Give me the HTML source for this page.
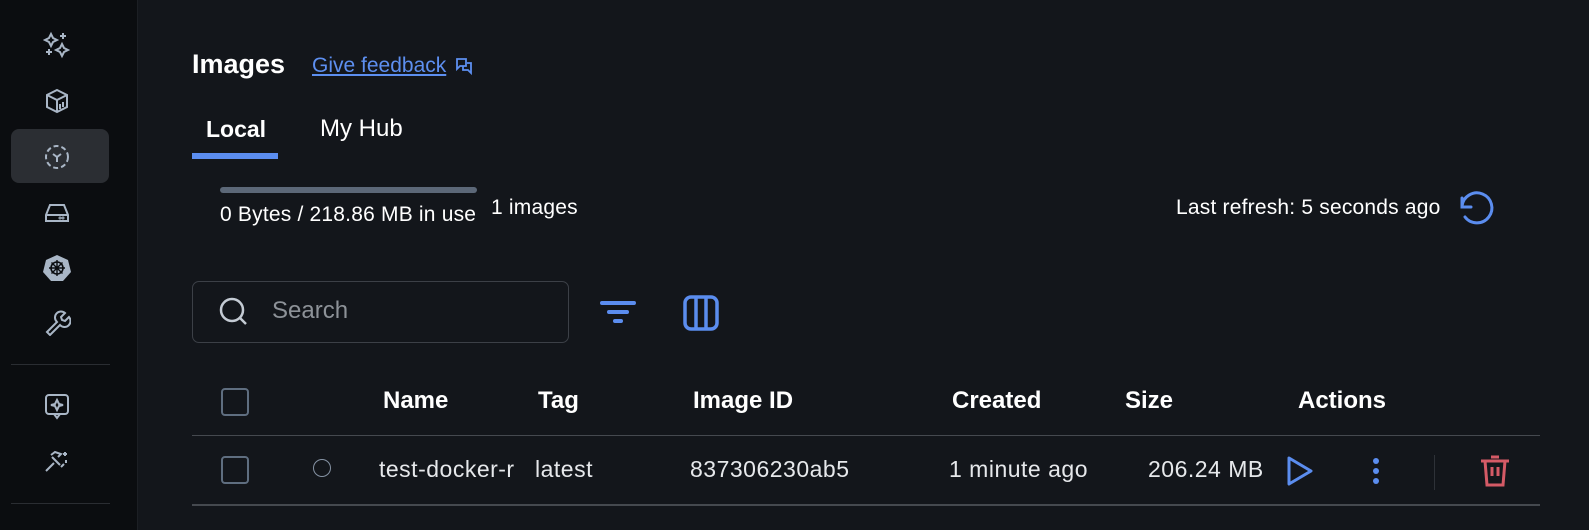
<!DOCTYPE html><html><head><style>
*{margin:0;padding:0;box-sizing:border-box}
body{width:1589px;height:530px;background:#13161b;font-family:"Liberation Sans",sans-serif;color:#fff;position:relative;overflow:hidden}
.a{position:absolute;white-space:nowrap}
.side{position:absolute;left:0;top:0;width:137px;height:530px;background:#0b0d10}
.ic{position:absolute;left:43px;width:28px;height:28px}
.h{font-weight:bold;font-size:24px;line-height:28px}
.r{font-size:23px;line-height:28px;color:#e6e8eb;letter-spacing:0.5px}
.t{font-size:21px;line-height:24px;letter-spacing:0.2px}
.cb{position:absolute;width:28px;height:28px;border:2.5px solid #5f6e80;border-radius:4px}
</style></head><body>
<div class="side">
<div class="a" style="left:11px;top:129px;width:98px;height:54px;background:#2b2e33;border-radius:8px"></div>
<div class="a" style="left:11px;top:364px;width:99px;height:1px;background:#2a2d32"></div>
<div class="a" style="left:11px;top:503px;width:99px;height:1px;background:#2a2d32"></div>
<svg class="ic" style="top:31px" viewBox="0 0 28 28" fill="none" stroke="#a9b6c6" stroke-width="2"><path d="M8 3l2 4 4 2-4 2-2 4-2-4-4-2 4-2z"/><path d="M20 2v6M17 5h6M6 18v6M3 21h6"/><path d="M19 13l2 4 4 2-4 2-2 4-2-4-4-2 4-2z"/></svg>
<svg class="ic" style="top:87px" viewBox="0 0 28 28" fill="none" stroke="#a9b6c6" stroke-width="2"><path d="M14 3l10 5v12l-10 5-10-5V8z"/><path d="M4 8l10 5 10-5M14 13v12"/><path d="M17 17v5M20 15v5"/></svg>
<svg class="ic" style="top:143px" viewBox="0 0 28 28" fill="none" stroke="#a9b6c6" stroke-width="2" stroke-dasharray="5 3"><circle cx="14" cy="14" r="11"/><path d="M10 11l4 3 4-3M14 14v5" stroke-dasharray="none"/></svg>
<svg class="ic" style="top:199px" viewBox="0 0 28 28" fill="none" stroke="#a9b6c6" stroke-width="2"><path d="M3 16l4-10h14l4 10v6H3z"/><path d="M3 16h22"/><circle cx="17" cy="19" r=".5"/><circle cx="20" cy="19" r=".5"/></svg>
<svg class="ic" style="top:254px" viewBox="0 0 28 28"><path d="M14 1l11 5 3 12-8 9H8l-8-9 3-12z" fill="#a9b6c6"/><circle cx="14" cy="14" r="6" fill="none" stroke="#0b0d10" stroke-width="1.6"/><path d="M14 6v16M6 14h16M8.5 8.5l11 11M19.5 8.5l-11 11" stroke="#0b0d10" stroke-width="1.4"/></svg>
<svg class="ic" style="top:308px" viewBox="0 0 28 28" fill="none" stroke="#a9b6c6" stroke-width="2"><path d="M4 24l10-10a6 6 0 0 1 8-9l-4 4 1 3 3 1 4-4a6 6 0 0 1-9 8L7 27z"/></svg>
<svg class="ic" style="top:392px" viewBox="0 0 28 28" fill="none" stroke="#a9b6c6" stroke-width="2"><rect x="3" y="3" width="22" height="19" rx="3"/><path d="M11 22l3 4 3-4"/><path d="M14 8l2 4 4 1-4 1-2 4-2-4-4-1 4-1z"/></svg>
<svg class="ic" style="top:447px" viewBox="0 0 28 28" fill="none" stroke="#a9b6c6" stroke-width="2"><path d="M3 24l8-8M9 10l8 8M8 8l4-3 6 2-3 3M18 20l3-3"/><path d="M22 5v4M20 7h4M23 13v3"/></svg>
</div>
<div class="a" style="left:137px;top:0;width:1px;height:530px;background:#1c1f24"></div>
<div class="a" style="left:192px;top:48px;font-size:27px;font-weight:bold;line-height:32px">Images</div>
<div class="a" style="left:312px;top:53px;font-size:21px;line-height:26px;color:#5d8ff0;text-decoration:underline">Give feedback</div>
<svg class="a" style="left:454px;top:56px" width="20" height="20" viewBox="0 0 20 20" fill="none" stroke="#5d8ff0" stroke-width="1.8"><path d="M3 3h9v7H6l-3 3z"/><path d="M9 10v4h5l3 3V7h-4"/></svg>
<div class="a" style="left:206px;top:115px;font-size:23px;font-weight:bold;line-height:28px">Local</div>
<div class="a" style="left:320px;top:115px;font-size:24px;line-height:28px">My Hub</div>
<div class="a" style="left:192px;top:153px;width:86px;height:6px;background:#5b8def"></div>
<div class="a" style="left:220px;top:187px;width:257px;height:6px;border-radius:3px;background:#5c6878"></div>
<div class="a t" style="left:220px;top:203px">0 Bytes / 218.86 MB in use</div>
<div class="a t" style="left:491px;top:196px">1 images</div>
<div class="a t" style="left:1176px;top:196px">Last refresh: 5 seconds ago</div>
<svg class="a" style="left:1457px;top:189px" width="40" height="40" viewBox="0 0 40 40" fill="none" stroke="#5b8def" stroke-width="3" stroke-linecap="round"><path d="M5 17A15 15 0 1 1 8 28"/><path d="M5 9v9h9"/></svg>
<div class="a" style="left:192px;top:281px;width:377px;height:62px;border:1px solid #3c4047;border-radius:7px"></div>
<svg class="a" style="left:218px;top:296px" width="32" height="32" viewBox="0 0 32 32" fill="none" stroke="#c4cbd4" stroke-width="2.5"><circle cx="14" cy="14" r="11"/><path d="M22 22l6 6"/></svg>
<div class="a" style="left:272px;top:297px;font-size:24px;line-height:28px;color:#8d9298">Search</div>
<svg class="a" style="left:600px;top:298px" width="36" height="30" fill="#5b8def"><rect x="0" y="3" width="36" height="4" rx="2"/><rect x="7" y="12" width="22" height="4" rx="2"/><rect x="13" y="21" width="10" height="4" rx="2"/></svg>
<svg class="a" style="left:683px;top:295px" width="36" height="36" fill="none" stroke="#5b8def" stroke-width="3.5"><rect x="2" y="2" width="32" height="32" rx="6"/><path d="M13 2v32M23 2v32"/></svg>
<div class="cb" style="left:221px;top:388px"></div>
<div class="a h" style="left:383px;top:387px">Name</div>
<div class="a h" style="left:538px;top:387px">Tag</div>
<div class="a h" style="left:693px;top:387px">Image ID</div>
<div class="a h" style="left:952px;top:387px">Created</div>
<div class="a h" style="left:1125px;top:387px">Size</div>
<div class="a h" style="left:1298px;top:387px">Actions</div>
<div class="a" style="left:192px;top:435px;width:1348px;height:1px;background:#45494f"></div>
<div class="cb" style="left:221px;top:456px"></div>
<div class="a" style="left:313px;top:459px;width:18px;height:18px;border:1.8px solid #8592a3;border-radius:50%"></div>
<div class="a r" style="left:379px;top:455px">test-docker-r</div>
<div class="a r" style="left:535px;top:455px">latest</div>
<div class="a r" style="left:690px;top:455px">837306230ab5</div>
<div class="a r" style="left:949px;top:455px">1 minute ago</div>
<div class="a r" style="left:1148px;top:455px">206.24 MB</div>
<svg class="a" style="left:1285px;top:455px" width="30" height="32" fill="none" stroke="#5b8def" stroke-width="3" stroke-linejoin="round"><path d="M4 3l22 13-22 13z"/></svg>
<svg class="a" style="left:1370px;top:456px" width="12" height="30" fill="#5b8def"><circle cx="6" cy="5" r="3"/><circle cx="6" cy="15" r="3"/><circle cx="6" cy="25" r="3"/></svg>
<div class="a" style="left:1434px;top:455px;width:1px;height:35px;background:#2e3238"></div>
<svg class="a" style="left:1479px;top:455px" width="32" height="32" fill="none" stroke="#d45a66" stroke-width="3"><path d="M2 6h28M12 2h8M6 6l2 24h16l2-24M13 12v9M19 12v9"/></svg>
<div class="a" style="left:192px;top:504px;width:1348px;height:2px;background:#45494f"></div>
</body></html>
